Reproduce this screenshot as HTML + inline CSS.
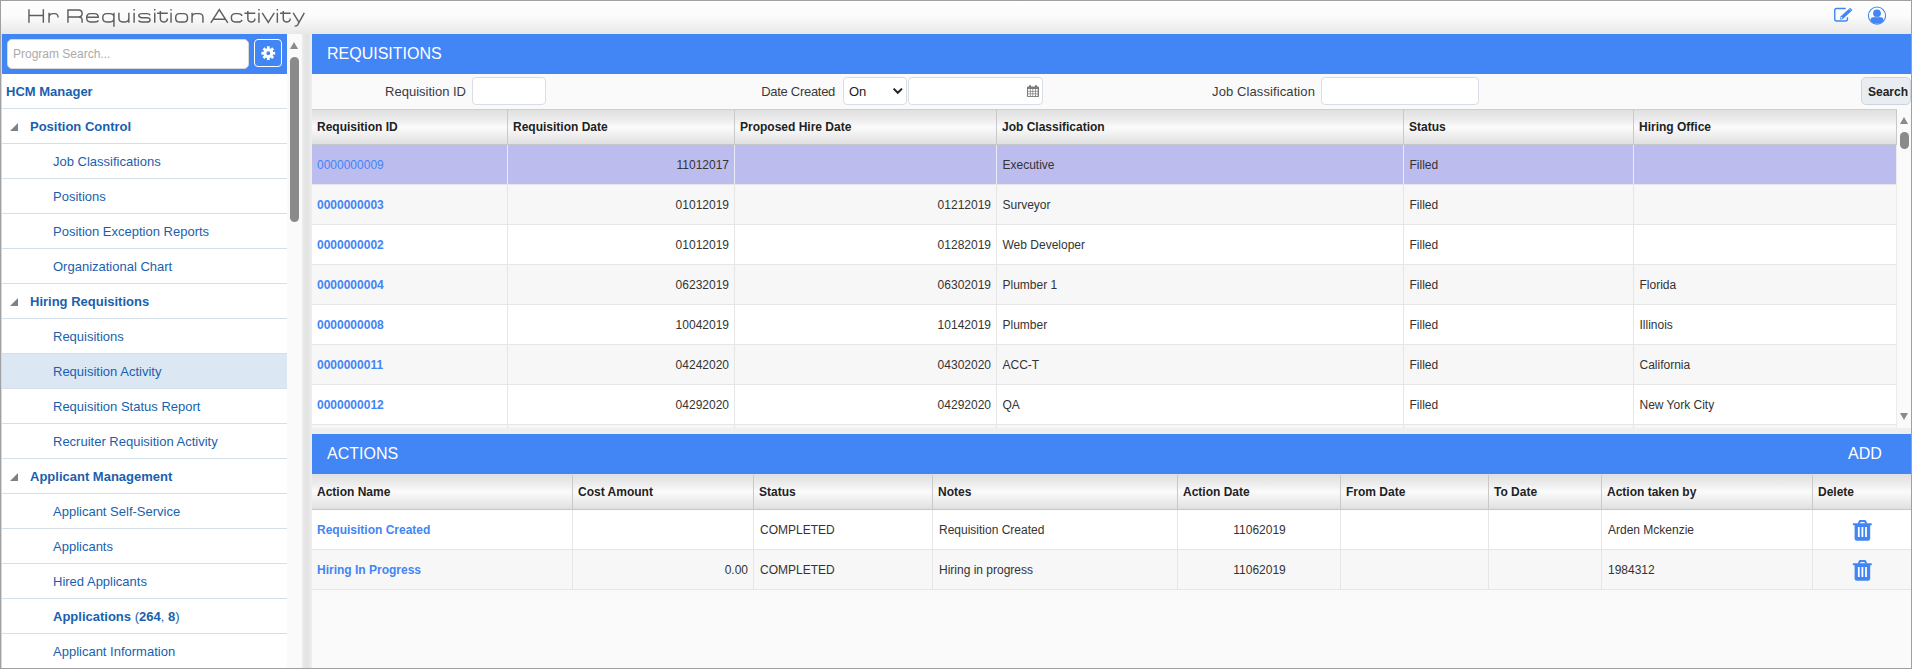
<!DOCTYPE html><html><head><meta charset="utf-8"><title>Hr Requisition Activity</title><style>
*{box-sizing:border-box;margin:0;padding:0}
html,body{width:1912px;height:669px;overflow:hidden;background:#fff;font-family:"Liberation Sans",sans-serif;color:#333}
.a{position:absolute;white-space:nowrap}
#frame{position:absolute;left:0;top:0;width:1912px;height:669px;border:1px solid #a0a0a0}
#titlebar{position:absolute;left:1px;top:1px;width:1910px;height:33px;background:linear-gradient(#fefefe,#fcfcfc 45%,#e8e8e8)}
#side{position:absolute;left:1px;top:34px;width:286px;height:634px;background:#fff;overflow:hidden;border-left:1px solid #d3dae2}
#sidehead{position:absolute;left:0;top:0;width:285px;height:40px;background:#4285f4}
#search{position:absolute;left:5px;top:5px;width:242px;height:30px;background:#fff;border-radius:5px;border:1px solid #d9d9d9;font-size:12px;color:#aaa;padding:7px 0 0 5px}
#gearbtn{position:absolute;left:252px;top:5px;width:28px;height:28px;border:1px solid #fff;border-radius:4px}
.mi{position:absolute;left:0;width:285px;height:35px;border-bottom:1px solid #d5dfe9;font-size:13px;color:#1a5fae;white-space:nowrap}
.mi span{position:absolute;top:10px}
.mi.b{font-weight:bold}
.tri{position:absolute;left:8px;top:14px;width:0;height:0;border-left:8px solid transparent;border-bottom:8px solid #7d8289}
#sscroll{position:absolute;left:287px;top:34px;width:15px;height:634px;background:#fafafa}
#splitter{position:absolute;left:302px;top:34px;width:10px;height:634px;background:linear-gradient(to right,#ececec,#e2e2e2 50%,#efefef)}
#main{position:absolute;left:312px;top:34px;width:1599px;height:634px;background:#fafafa;overflow:hidden}
.band{position:absolute;left:0;width:1599px;height:40px;background:#4285f4;color:#fff;font-size:16px}
.band span{position:absolute;top:11px}
.lbl{position:absolute;font-size:13px;color:#3a3a3a;white-space:nowrap}
.inp{position:absolute;height:28px;background:#fff;border:1px solid #d8dee6;border-radius:4px}
.hdr{position:absolute;left:0;height:36px;background:linear-gradient(#e0e0e0,#ececec 28%,#fbfbfb 50%,#eeeeee 75%,#e0e0e0);border-top:1px solid #cfcfcf;border-bottom:1px solid #c6c6c6}
.hc{position:absolute;top:0;height:34px;border-left:1px solid #c9c9c9;font-size:12px;font-weight:bold;color:#222;white-space:nowrap}
.hc span{position:absolute;top:10px}
.row{position:absolute;left:0;height:40px;border-bottom:1px solid #e6e6e6;font-size:12px;color:#333}
.c{position:absolute;top:0;height:39px;border-left:1px solid #e6e6e6;white-space:nowrap}
.c span{position:absolute;top:13px}
.lnk{color:#4285f4;font-weight:bold}
.sbar{position:absolute;background:#8a8a8a;border-radius:5px}
</style></head><body>
<div id="frame"></div><div id="titlebar"></div>
<svg class="a" style="left:0;top:0" width="320" height="34" viewBox="0 0 320 34"><path d="M28.95 9.2 V22.8 M43.35 9.2 V22.8 M28.95 15.4 H43.35 M49.05 12.8 V22.8 M49.05 17.2 Q49.3 13.6 53.2 13.6 H54.6 Q58.1 13.6 58.1 17.6 M67.95 9.2 V22.8 M67.95 10.0 H78.6 Q82.1 10.0 82.1 13.4 Q82.1 16.9 78.6 16.9 H67.95 M78.6 16.9 Q82.1 16.9 82.1 20 V22.8 M86.7 17.3 H98.3 Q98.3 13.6 94.2 13.6 H90.6 Q86.7 13.6 86.7 17.5 V18.1 Q86.7 22 90.6 22 H94.4 Q97.9 22 98.3 20.3 M113.95 12.8 V26.8 M113.95 17.6 Q113.95 13.6 109.9 13.6 H106.7 Q102.8 13.6 102.8 17.5 V18.1 Q102.8 22 106.7 22 H109.9 Q113.95 22 113.95 18.1 M118.9 12.8 V18.1 Q118.9 22 122.8 22 H125 Q128.85 22 128.85 18.1 M128.85 12.8 V22.8 M134.1 12.8 V22.8 M134.10 8.9 V10.4 M150.0 15.2 Q149.6 13.6 146.6 13.6 H142.2 Q138.8 13.6 138.8 15.6 Q138.8 17.7 142.2 17.7 H146.8 Q150.1 17.7 150.1 19.9 Q150.1 22 146.8 22 H142 Q139 22 138.8 20.4 M154.75 12.8 V22.8 M154.75 8.9 V10.4 M160.35 10.9 V18.6 Q160.35 22 163.55 22 H164.20 Q167.40 22 167.40 18.6 M157.10 13.3 H167.80 M171.05 12.8 V22.8 M171.05 8.9 V10.4 M179.50 13.60 H183.70 Q187.50 13.60 187.50 17.40 V18.20 Q187.50 22.00 183.70 22.00 H179.50 Q175.70 22.00 175.70 18.20 V17.40 Q175.70 13.60 179.50 13.60 Z M192.05 12.8 V22.8 M192.05 17.5 Q192.05 13.6 196 13.6 H199 Q202.95 13.6 202.95 17.5 V22.8 M210.8 22.8 L219.3 9.7 L227.8 22.8 M213.4 19.2 H225.2 M241.9 15.8 Q241.6 13.6 238 13.6 H235.3 Q231.4 13.6 231.4 17.5 V18.1 Q231.4 22 235.3 22 H238 Q241.6 22 241.9 19.8 M247.85 10.9 V18.6 Q247.85 22 251.05 22 H251.70 Q254.90 22 254.90 18.6 M244.40 13.3 H255.30 M258.95 12.8 V22.8 M258.95 8.9 V10.4 M262.2 12.8 L268.25 22.4 L274.3 12.8 M277.35 12.8 V22.8 M277.35 8.9 V10.4 M283.25 10.9 V18.6 Q283.25 22 286.45 22 H287.00 Q290.20 22 290.20 18.6 M280.00 13.3 H290.60 M293.2 12.8 L299.0 22.3 M304.3 12.8 L297.7 24.9 Q296.9 26.1 294.6 26.1" fill="none" stroke="#5e5e5e" stroke-width="1.45" stroke-linejoin="miter"/></svg>
<div id="side"><div id="sidehead"><div id="search">Program Search...</div><div id="gearbtn"></div></div>
<div class="mi b" style="top:40px"><span style="left:4px">HCM Manager</span></div>
<div class="mi b" style="top:75px"><div class="tri"></div><span style="left:28px">Position Control</span></div>
<div class="mi" style="top:110px"><span style="left:51px">Job Classifications</span></div>
<div class="mi" style="top:145px"><span style="left:51px">Positions</span></div>
<div class="mi" style="top:180px"><span style="left:51px">Position Exception Reports</span></div>
<div class="mi" style="top:215px"><span style="left:51px">Organizational Chart</span></div>
<div class="mi b" style="top:250px"><div class="tri"></div><span style="left:28px">Hiring Requisitions</span></div>
<div class="mi" style="top:285px"><span style="left:51px">Requisitions</span></div>
<div class="mi" style="top:320px;background:#dce7f4"><span style="left:51px">Requisition Activity</span></div>
<div class="mi" style="top:355px"><span style="left:51px">Requisition Status Report</span></div>
<div class="mi" style="top:390px"><span style="left:51px">Recruiter Requisition Activity</span></div>
<div class="mi b" style="top:425px"><div class="tri"></div><span style="left:28px">Applicant Management</span></div>
<div class="mi" style="top:460px"><span style="left:51px">Applicant Self-Service</span></div>
<div class="mi" style="top:495px"><span style="left:51px">Applicants</span></div>
<div class="mi" style="top:530px"><span style="left:51px">Hired Applicants</span></div>
<div class="mi" style="top:565px"><span style="left:51px"><b>Applications</b> (<b>264</b>, <b>8</b>)</span></div>
<div class="mi" style="top:600px"><span style="left:51px">Applicant Information</span></div>
</div>
<div id="sscroll"></div><div id="splitter"></div>
<div id="main">
<div class="band" style="top:0"><span style="left:15px">REQUISITIONS</span></div>
<div class="lbl" style="right:1445px;top:50px">Requisition ID</div>
<div class="inp" style="left:160px;top:43px;width:74px"></div>
<div class="lbl" style="right:1076px;top:50px;letter-spacing:-0.3px">Date Created</div>
<div class="inp" style="left:531px;top:43px;width:64px"></div>
<div class="a" style="left:537px;top:50px;font-size:13px;color:#222">On</div>
<div class="inp" style="left:596px;top:43px;width:135px"></div>
<div class="lbl" style="right:596px;top:50px;letter-spacing:0.1px">Job Classification</div>
<div class="inp" style="left:1009px;top:43px;width:158px"></div>
<div class="a" style="left:1549px;top:43px;width:50px;height:28px;background:#e9edf1;border:1px solid #cdd4dc;border-radius:5px;font-size:12px;font-weight:bold;color:#222;padding:7px 0 0 6px">Search</div>
<div class="hdr" style="top:75px;width:1585px;border-right:1px solid #c9c9c9">
<div class="hc" style="left:0px;width:195px;border-left:none"><span style="left:5px">Requisition ID</span></div>
<div class="hc" style="left:195px;width:227px;"><span style="left:5px">Requisition Date</span></div>
<div class="hc" style="left:422px;width:262px;"><span style="left:5px">Proposed Hire Date</span></div>
<div class="hc" style="left:684px;width:407px;"><span style="left:5px">Job Classification</span></div>
<div class="hc" style="left:1091px;width:230px;"><span style="left:5px">Status</span></div>
<div class="hc" style="left:1321px;width:264px;"><span style="left:5px">Hiring Office</span></div>
</div>
<div class="a" style="left:0;top:0;width:1599px;height:394px;overflow:hidden">
<div class="row" style="top:111px;width:1585px;background:#bdbcef;border-right:1px solid #ececec">
<div class="c" style="left:0px;width:195px;border-left:none"><span class="lnk" style="left:5px;font-weight:normal">0000000009</span></div>
<div class="c" style="left:195px;width:227px;border-left-color:#ececf8"><span style="right:5px">11012017</span></div>
<div class="c" style="left:422px;width:262px;border-left-color:#ececf8"></div>
<div class="c" style="left:684px;width:407px;border-left-color:#ececf8"><span style="left:5.5px">Executive</span></div>
<div class="c" style="left:1091px;width:230px;border-left-color:#ececf8"><span style="left:5.5px">Filled</span></div>
<div class="c" style="left:1321px;width:264px;border-left-color:#ececf8"></div>
</div>
<div class="row" style="top:151px;width:1585px;background:#f7f7f7;border-right:1px solid #ececec">
<div class="c" style="left:0px;width:195px;border-left:none"><span class="lnk" style="left:5px;">0000000003</span></div>
<div class="c" style="left:195px;width:227px;border-left-color:#e6e6e6"><span style="right:5px">01012019</span></div>
<div class="c" style="left:422px;width:262px;border-left-color:#e6e6e6"><span style="right:5px">01212019</span></div>
<div class="c" style="left:684px;width:407px;border-left-color:#e6e6e6"><span style="left:5.5px">Surveyor</span></div>
<div class="c" style="left:1091px;width:230px;border-left-color:#e6e6e6"><span style="left:5.5px">Filled</span></div>
<div class="c" style="left:1321px;width:264px;border-left-color:#e6e6e6"></div>
</div>
<div class="row" style="top:191px;width:1585px;background:#ffffff;border-right:1px solid #ececec">
<div class="c" style="left:0px;width:195px;border-left:none"><span class="lnk" style="left:5px;">0000000002</span></div>
<div class="c" style="left:195px;width:227px;border-left-color:#e6e6e6"><span style="right:5px">01012019</span></div>
<div class="c" style="left:422px;width:262px;border-left-color:#e6e6e6"><span style="right:5px">01282019</span></div>
<div class="c" style="left:684px;width:407px;border-left-color:#e6e6e6"><span style="left:5.5px">Web Developer</span></div>
<div class="c" style="left:1091px;width:230px;border-left-color:#e6e6e6"><span style="left:5.5px">Filled</span></div>
<div class="c" style="left:1321px;width:264px;border-left-color:#e6e6e6"></div>
</div>
<div class="row" style="top:231px;width:1585px;background:#f7f7f7;border-right:1px solid #ececec">
<div class="c" style="left:0px;width:195px;border-left:none"><span class="lnk" style="left:5px;">0000000004</span></div>
<div class="c" style="left:195px;width:227px;border-left-color:#e6e6e6"><span style="right:5px">06232019</span></div>
<div class="c" style="left:422px;width:262px;border-left-color:#e6e6e6"><span style="right:5px">06302019</span></div>
<div class="c" style="left:684px;width:407px;border-left-color:#e6e6e6"><span style="left:5.5px">Plumber 1</span></div>
<div class="c" style="left:1091px;width:230px;border-left-color:#e6e6e6"><span style="left:5.5px">Filled</span></div>
<div class="c" style="left:1321px;width:264px;border-left-color:#e6e6e6"><span style="left:5.5px">Florida</span></div>
</div>
<div class="row" style="top:271px;width:1585px;background:#ffffff;border-right:1px solid #ececec">
<div class="c" style="left:0px;width:195px;border-left:none"><span class="lnk" style="left:5px;">0000000008</span></div>
<div class="c" style="left:195px;width:227px;border-left-color:#e6e6e6"><span style="right:5px">10042019</span></div>
<div class="c" style="left:422px;width:262px;border-left-color:#e6e6e6"><span style="right:5px">10142019</span></div>
<div class="c" style="left:684px;width:407px;border-left-color:#e6e6e6"><span style="left:5.5px">Plumber</span></div>
<div class="c" style="left:1091px;width:230px;border-left-color:#e6e6e6"><span style="left:5.5px">Filled</span></div>
<div class="c" style="left:1321px;width:264px;border-left-color:#e6e6e6"><span style="left:5.5px">Illinois</span></div>
</div>
<div class="row" style="top:311px;width:1585px;background:#f7f7f7;border-right:1px solid #ececec">
<div class="c" style="left:0px;width:195px;border-left:none"><span class="lnk" style="left:5px;">0000000011</span></div>
<div class="c" style="left:195px;width:227px;border-left-color:#e6e6e6"><span style="right:5px">04242020</span></div>
<div class="c" style="left:422px;width:262px;border-left-color:#e6e6e6"><span style="right:5px">04302020</span></div>
<div class="c" style="left:684px;width:407px;border-left-color:#e6e6e6"><span style="left:5.5px">ACC-T</span></div>
<div class="c" style="left:1091px;width:230px;border-left-color:#e6e6e6"><span style="left:5.5px">Filled</span></div>
<div class="c" style="left:1321px;width:264px;border-left-color:#e6e6e6"><span style="left:5.5px">California</span></div>
</div>
<div class="row" style="top:351px;width:1585px;background:#ffffff;border-right:1px solid #ececec">
<div class="c" style="left:0px;width:195px;border-left:none"><span class="lnk" style="left:5px;">0000000012</span></div>
<div class="c" style="left:195px;width:227px;border-left-color:#e6e6e6"><span style="right:5px">04292020</span></div>
<div class="c" style="left:422px;width:262px;border-left-color:#e6e6e6"><span style="right:5px">04292020</span></div>
<div class="c" style="left:684px;width:407px;border-left-color:#e6e6e6"><span style="left:5.5px">QA</span></div>
<div class="c" style="left:1091px;width:230px;border-left-color:#e6e6e6"><span style="left:5.5px">Filled</span></div>
<div class="c" style="left:1321px;width:264px;border-left-color:#e6e6e6"><span style="left:5.5px">New York City</span></div>
</div>
<div class="row" style="top:391px;width:1585px;background:#f7f7f7;border-right:1px solid #ececec">
<div class="c" style="left:0px;width:195px;border-left:none"></div>
<div class="c" style="left:195px;width:227px;border-left-color:#e6e6e6"></div>
<div class="c" style="left:422px;width:262px;border-left-color:#e6e6e6"></div>
<div class="c" style="left:684px;width:407px;border-left-color:#e6e6e6"></div>
<div class="c" style="left:1091px;width:230px;border-left-color:#e6e6e6"></div>
<div class="c" style="left:1321px;width:264px;border-left-color:#e6e6e6"></div>
</div>
</div>
<div class="a" style="left:0;top:394px;width:1599px;height:6px;background:#efefef"></div>
<div class="a" style="left:1585px;top:75px;width:14px;height:319px;background:#fafafa"></div>
<div class="a" style="left:1588px;top:83px;width:0;height:0;border-left:4.5px solid transparent;border-right:4.5px solid transparent;border-bottom:7px solid #8a8a8a"></div>
<div class="sbar" style="left:1588px;top:98px;width:9px;height:17px"></div>
<div class="a" style="left:1588px;top:379px;width:0;height:0;border-left:4.6px solid transparent;border-right:4.6px solid transparent;border-top:7px solid #8a8a8a"></div>
<div class="band" style="top:400px"><span style="left:15px">ACTIONS</span><span style="left:1536px">ADD</span></div>
<div class="hdr" style="top:440px;width:1599px;border-top:none">
<div class="hc" style="left:0px;width:260px;top:1px;border-left:none"><span style="left:5px">Action Name</span></div>
<div class="hc" style="left:260px;width:181px;top:1px;"><span style="left:5px">Cost Amount</span></div>
<div class="hc" style="left:441px;width:179px;top:1px;"><span style="left:5px">Status</span></div>
<div class="hc" style="left:620px;width:245px;top:1px;"><span style="left:5px">Notes</span></div>
<div class="hc" style="left:865px;width:163px;top:1px;"><span style="left:5px">Action Date</span></div>
<div class="hc" style="left:1028px;width:148px;top:1px;"><span style="left:5px">From Date</span></div>
<div class="hc" style="left:1176px;width:113px;top:1px;"><span style="left:5px">To Date</span></div>
<div class="hc" style="left:1289px;width:211px;top:1px;"><span style="left:5px">Action taken by</span></div>
<div class="hc" style="left:1500px;width:99px;top:1px;"><span style="left:5px">Delete</span></div>
</div>
<div class="row" style="top:476px;width:1599px;background:#ffffff">
<div class="c" style="left:0px;width:260px;border-left:none"><span class="lnk" style="left:5px">Requisition Created</span></div>
<div class="c" style="left:260px;width:181px;"></div>
<div class="c" style="left:441px;width:179px;"><span style="left:6px">COMPLETED</span></div>
<div class="c" style="left:620px;width:245px;"><span style="left:6px">Requisition Created</span></div>
<div class="c" style="left:865px;width:163px;"><span style="left:0;width:163px;text-align:center">11062019</span></div>
<div class="c" style="left:1028px;width:148px;"></div>
<div class="c" style="left:1176px;width:113px;"></div>
<div class="c" style="left:1289px;width:211px;"><span style="left:6px">Arden Mckenzie</span></div>
<div class="c" style="left:1500px;width:99px;"></div>
</div>
<div class="row" style="top:516px;width:1599px;background:#f7f7f7">
<div class="c" style="left:0px;width:260px;border-left:none"><span class="lnk" style="left:5px">Hiring In Progress</span></div>
<div class="c" style="left:260px;width:181px;"><span style="right:5px">0.00</span></div>
<div class="c" style="left:441px;width:179px;"><span style="left:6px">COMPLETED</span></div>
<div class="c" style="left:620px;width:245px;"><span style="left:6px">Hiring in progress</span></div>
<div class="c" style="left:865px;width:163px;"><span style="left:0;width:163px;text-align:center">11062019</span></div>
<div class="c" style="left:1028px;width:148px;"></div>
<div class="c" style="left:1176px;width:113px;"></div>
<div class="c" style="left:1289px;width:211px;"><span style="left:6px">1984312</span></div>
<div class="c" style="left:1500px;width:99px;"></div>
</div>
</div>
<svg class="a" style="left:258px;top:43px" width="21" height="21" viewBox="0 0 21 21"><path fill="#fff" fill-rule="evenodd" d="M15.06 8.66 L15.13 8.91 L17.15 8.74 L17.15 11.66 L15.13 11.49 L14.75 12.48 L14.63 12.71 L16.17 14.01 L14.11 16.07 L12.81 14.53 L11.84 14.96 L11.59 15.03 L11.76 17.05 L8.84 17.05 L9.01 15.03 L8.02 14.65 L7.79 14.53 L6.49 16.07 L4.43 14.01 L5.97 12.71 L5.54 11.74 L5.47 11.49 L3.45 11.66 L3.45 8.74 L5.47 8.91 L5.85 7.92 L5.97 7.69 L4.43 6.39 L6.49 4.33 L7.79 5.87 L8.76 5.44 L9.01 5.37 L8.84 3.35 L11.76 3.35 L11.59 5.37 L12.58 5.75 L12.81 5.87 L14.11 4.33 L16.17 6.39 L14.63 7.69 Z M8.40 10.20 a1.9 1.9 0 1 0 3.8 0 a1.9 1.9 0 1 0 -3.8 0 Z"/></svg>
<svg class="a" style="left:1850px;top:518px" width="24" height="24" viewBox="0 0 24 24"><g fill="#4285f4"><rect x="2.8" y="5.3" width="19" height="2" rx="0.6"/><path fill-rule="evenodd" d="M7.8 5.8 L8.7 3.1 Q9.1 2 10.3 2 L14.7 2 Q15.9 2 16.3 3.1 L17.2 5.8 Z M10.1 5.8 L10.6 3.9 L14.4 3.9 L14.9 5.8 Z"/><path d="M4.6 7 H20.2 V20.6 Q20.2 22.8 18 22.8 H6.8 Q4.6 22.8 4.6 20.6 Z"/></g><g fill="#fff"><rect x="7.9" y="9" width="1.8" height="10"/><rect x="11.5" y="9" width="1.8" height="10"/><rect x="15.1" y="9" width="1.8" height="10"/></g></svg>
<svg class="a" style="left:1850px;top:558px" width="24" height="24" viewBox="0 0 24 24"><g fill="#4285f4"><rect x="2.8" y="5.3" width="19" height="2" rx="0.6"/><path fill-rule="evenodd" d="M7.8 5.8 L8.7 3.1 Q9.1 2 10.3 2 L14.7 2 Q15.9 2 16.3 3.1 L17.2 5.8 Z M10.1 5.8 L10.6 3.9 L14.4 3.9 L14.9 5.8 Z"/><path d="M4.6 7 H20.2 V20.6 Q20.2 22.8 18 22.8 H6.8 Q4.6 22.8 4.6 20.6 Z"/></g><g fill="#fff"><rect x="7.9" y="9" width="1.8" height="10"/><rect x="11.5" y="9" width="1.8" height="10"/><rect x="15.1" y="9" width="1.8" height="10"/></g></svg>
<svg class="a" style="left:1832px;top:5px" width="24" height="20" viewBox="0 0 24 20"><path d="M13.8 3.55 H4.75 Q2.75 3.55 2.75 5.55 V14.05 Q2.75 16.05 4.75 16.05 H13.45 Q15.45 16.05 15.45 14.05 V12.2" fill="none" stroke="#4285f4" stroke-width="1.4"/><line x1="9.4" y1="12.9" x2="19.3" y2="4.0" stroke="#4285f4" stroke-width="3.4" stroke-linecap="butt"/><path d="M8.0 14.6 L8.6 11.6 L10.9 13.9 Z" fill="#4285f4"/><circle cx="9.5" cy="12.8" r="0.8" fill="#fff"/><line x1="16.8" y1="3.6" x2="19.4" y2="6.3" stroke="#fff" stroke-width="0.5"/></svg>
<svg class="a" style="left:1866px;top:5px" width="22" height="22" viewBox="0 0 22 22"><defs><clipPath id="uc"><circle cx="11" cy="10.6" r="8.2"/></clipPath></defs><circle cx="11" cy="10.6" r="8.6" fill="none" stroke="#4285f4" stroke-width="1.1"/><circle cx="11" cy="8.3" r="3.9" fill="#4285f4"/><path clip-path="url(#uc)" d="M4.5 20 V14.5 Q4.8 12 7.5 12 H14.5 Q17.2 12 17.5 14.5 V20 Z" fill="#4285f4"/><line x1="7" y1="12.1" x2="15" y2="12.1" stroke="#fff" stroke-width="0.5" opacity="0.6"/></svg>
<svg class="a" style="left:1027px;top:85px" width="12" height="12" viewBox="0 0 12 12"><rect x="0" y="1.5" width="12" height="10.5" rx="0.8" fill="#7a7a7a"/><rect x="2" y="0" width="2" height="2.5" rx="0.8" fill="#7a7a7a"/><rect x="8" y="0" width="2" height="2.5" rx="0.8" fill="#7a7a7a"/><g fill="#fff"><rect x="1.0" y="4.0" width="1.9" height="1.9"/><rect x="1.0" y="6.6" width="1.9" height="1.9"/><rect x="1.0" y="9.2" width="1.9" height="1.9"/><rect x="3.6" y="4.0" width="1.9" height="1.9"/><rect x="3.6" y="6.6" width="1.9" height="1.9"/><rect x="3.6" y="9.2" width="1.9" height="1.9"/><rect x="6.2" y="4.0" width="1.9" height="1.9"/><rect x="6.2" y="6.6" width="1.9" height="1.9"/><rect x="6.2" y="9.2" width="1.9" height="1.9"/><rect x="8.8" y="4.0" width="1.9" height="1.9"/><rect x="8.8" y="6.6" width="1.9" height="1.9"/><rect x="8.8" y="9.2" width="1.9" height="1.9"/></g></svg>
<svg class="a" style="left:891px;top:85px" width="14" height="12" viewBox="0 0 14 12"><path d="M2.6 3.6 L6.8 7.8 L11 3.6" fill="none" stroke="#222" stroke-width="2"/></svg>
<div class="a" style="left:290px;top:42px;width:0;height:0;border-left:4.5px solid transparent;border-right:4.5px solid transparent;border-bottom:7px solid #8a8a8a"></div>
<div class="sbar" style="left:290px;top:57px;width:9px;height:165px"></div>
</body></html>
